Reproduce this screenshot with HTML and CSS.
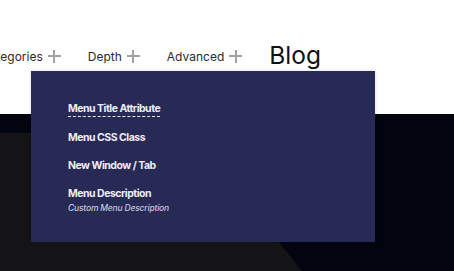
FILE: index.html
```html
<!DOCTYPE html>
<html>
<head>
<meta charset="utf-8">
<link rel="stylesheet" href="styles.css">
</head>
<body>
<header class="header">
  <nav class="nav">
    <span class="nav-item">Categories <span class="plus"></span></span>
    <span class="nav-item">Depth <span class="plus"></span></span>
    <span class="nav-item">Advanced <span class="plus"></span></span>
    <span class="nav-item blog">Blog</span>
  </nav>
</header>
<section class="hero">
  <div class="shape"></div>
</section>
<div class="dropdown">
  <ul class="menu">
    <li class="item"><span class="title-attr">Menu Title Attribute</span></li>
    <li class="item">Menu CSS Class</li>
    <li class="item">New Window / Tab</li>
    <li class="item">Menu Description<span class="desc">Custom Menu Description</span></li>
  </ul>
</div>
</body>
</html>
```
FILE: styles.css
```css
html, body {
  margin: 0;
  padding: 0;
}
body {
  width: 454px;
  height: 271px;
  overflow: hidden;
  font-family: Inter, "Noto Sans", sans-serif;
  background: #ffffff;
  position: relative;
}
.header {
  height: 114px;
  background: #ffffff;
}
.nav {
  display: flex;
  align-items: center;
  gap: 27px;
  margin-left: -19px;
  padding-top: 44px;
  height: 24px;
}
.nav-item {
  display: flex;
  align-items: center;
  gap: 5px;
  font-size: 12px;
  color: #2a2a2a;
  white-space: nowrap;
}
.plus {
  display: inline-block;
  width: 13px;
  height: 13px;
  position: relative;
}
.plus::before, .plus::after {
  content: "";
  position: absolute;
  background: #a3a3a3;
}
.plus::before {
  left: 0;
  right: 0;
  top: 5.5px;
  height: 2px;
}
.plus::after {
  top: 0;
  bottom: 0;
  left: 5.5px;
  width: 2px;
}
.blog {
  font-size: 24.5px;
  color: #111111;
  margin-top: -2px;
}
.hero {
  height: 157px;
  background: #02050f;
  padding-top: 19px;
  box-sizing: border-box;
}
.shape {
  height: 138px;
  background: #141416;
  clip-path: polygon(0 0, 193px 0, 302px 100%, 0 100%);
}
.dropdown {
  position: absolute;
  left: 31px;
  top: 71px;
  width: 344px;
  height: 171px;
  background: #282a56;
  box-shadow: 0 0 4px rgba(0, 0, 0, 0.15);
}
.menu {
  list-style: none;
  margin: 0;
  padding: 31px 0 0 37px;
  display: flex;
  flex-direction: column;
  gap: 13px;
}
.item {
  font-size: 10.5px;
  font-weight: 700;
  letter-spacing: -0.5px;
  color: #eceef6;
  line-height: 15px;
  display: flex;
  flex-direction: column;
}
.title-attr {
  border-bottom: 1px dashed #e6e8f2;
  align-self: flex-start;
  line-height: 14px;
}
.desc {
  font-size: 8.5px;
  font-weight: 500;
  font-style: italic;
  letter-spacing: -0.2px;
  color: #c3c6dc;
  line-height: 14px;
}
```
